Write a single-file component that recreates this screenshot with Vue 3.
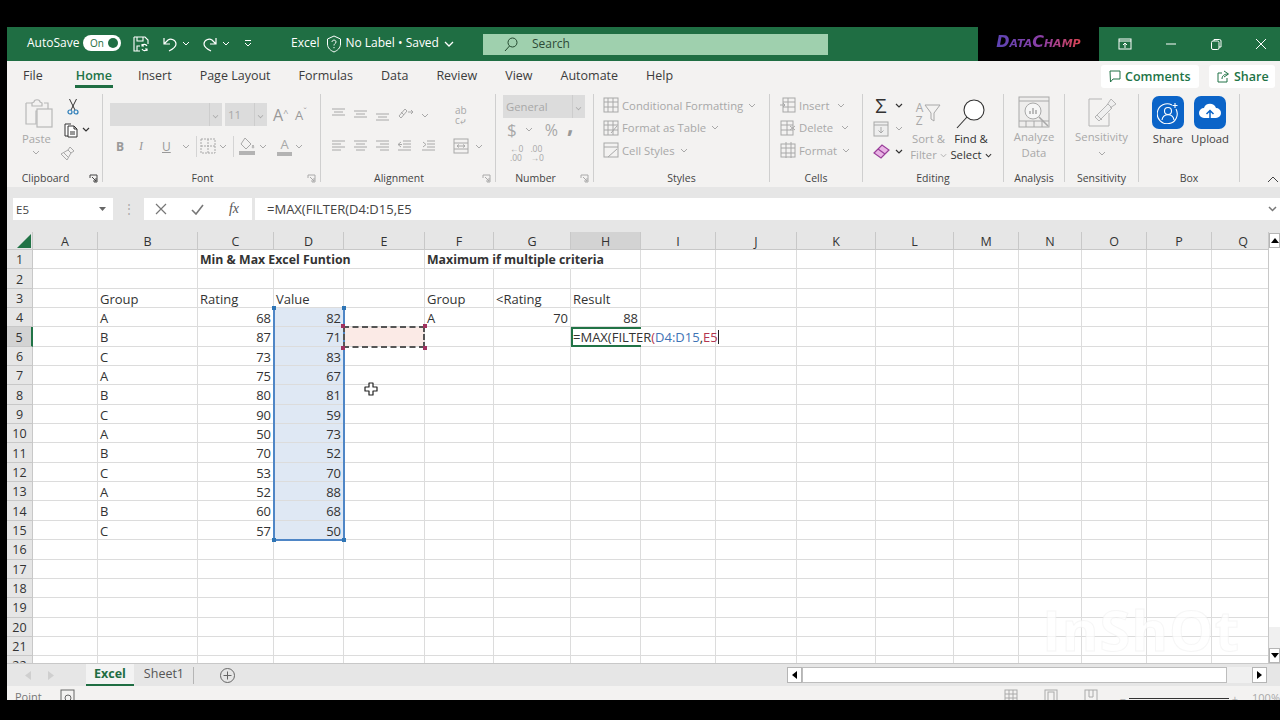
<template>
  <div class="screen">
    <div class="window">
      <!-- title bar -->
      <header class="titlebar">
        <span class="autosave">AutoSave</span>
        <span class="toggle">On<i></i></span>
        <svg class="tb-save" width="18" height="18" viewBox="0 0 18 18" fill="none" stroke="#fff" stroke-width="1.1"><path d="M2 2h11l3 3v4M2 2v14h6M5 2v4h6V2M5 16v-5h3"/><path d="M15 11a3 3 0 0 0-5-.5M10 14a3 3 0 0 0 5 .5M10 9v2h2M15 16v-2h-2"/></svg>
        <svg class="tb-undo" width="18" height="18" viewBox="0 0 18 18" fill="none" stroke="#fff" stroke-width="1.2"><path d="M3 3v6h6M3 9l4-4c3-2 8 0 8 4 0 3-3 5-7 7"/></svg>
        <svg class="chev-w" width="8" height="6" viewBox="0 0 8 6" fill="none" stroke="#fff"><path d="M1 1l3 3 3-3"/></svg>
        <svg class="tb-redo" width="18" height="18" viewBox="0 0 18 18" fill="none" stroke="#fff" stroke-width="1.2"><path d="M15 3v6H9M15 9l-4-4C8 3 3 5 3 9c0 3 3 5 7 7"/></svg>
        <svg class="chev-w" width="8" height="6" viewBox="0 0 8 6" fill="none" stroke="#fff"><path d="M1 1l3 3 3-3"/></svg>
        <svg class="tb-custom" width="10" height="10" viewBox="0 0 10 10" fill="none" stroke="#fff"><path d="M2 1.500h6M2 4l3 3 3-3" /></svg>
        <span class="doc">Excel</span>
        <svg class="shield" width="16" height="18" viewBox="0 0 16 18" fill="none" stroke="#fff" stroke-width="1"><path d="M8 1l6.500 3v5c0 4-3 6.500-6.500 8-3.500-1.500-6.500-4-6.500-8V4z"/><path d="M6 7c0-2.500 4-2.500 4 0 0 1.500-2 1.500-2 3.500M8 12v1.200"/></svg>
        <span class="doc-label">No Label • Saved</span>
        <svg class="chev-doc" width="10" height="7" viewBox="0 0 10 7" fill="none" stroke="#fff" stroke-width="1.300"><path d="M1 1l4 4 4-4"/></svg>
        <div class="search">
          <svg width="14" height="15" viewBox="0 0 14 15" fill="none" stroke="#24492f" stroke-width="1"><circle cx="8.500" cy="5.500" r="4.500"/><path d="M5.500 9L1 14"/></svg>
          <span>Search</span>
        </div>
        <div class="brand"><span>DataChamp</span></div>
        <div class="winbtns">
          <svg width="14" height="14" viewBox="0 0 14 14" fill="none" stroke="#fff"><rect x="1" y="2" width="12" height="10"/><path d="M1 4h12M7 11V6M5 8l2-2 2 2"/></svg>
          <svg width="12" height="12" viewBox="0 0 12 12" stroke="#fff"><path d="M1 6h10"/></svg>
          <svg width="12" height="12" viewBox="0 0 12 12" fill="none" stroke="#fff"><rect x="1.500" y="3" width="7.500" height="8.500" rx="1.500"/><path d="M4 3V1.500h5.500a1.500 1.500 0 0 1 1.500 1.500v6H9"/></svg>
          <svg width="12" height="12" viewBox="0 0 12 12" stroke="#fff"><path d="M1 1l10 10M11 1L1 11"/></svg>
        </div>
      </header>

      <!-- tabs -->
      <nav class="tabs">
        <span class="tab" v-for="t in tabs" :key="t" :class="{ active: t === 'Home' }">{{ t }}</span>
        <div class="tab-actions">
          <button class="pill comments">
            <svg width="12" height="13" viewBox="0 0 12 13" fill="none" stroke="#217346"><path d="M1 1h10v8H4L1.500 12z"/></svg>
            Comments
          </button>
          <button class="pill share">
            <svg width="13" height="13" viewBox="0 0 13 13" fill="none" stroke="#217346"><path d="M5 3H1v9h9V8M7 1l4.500 3L7 7M11 4C7 4 5 6 5 9"/></svg>
            Share
          </button>
        </div>
      </nav>

      <!-- ribbon -->
      <section class="ribbon">
        <div class="group g-clip">
          <div class="body clip">
            <div class="paste">
              <svg width="28" height="30" viewBox="0 0 28 30" fill="#f3f2f1" stroke="#b8b8b8" stroke-width="1.200"><path d="M1 5h6M19 5h4v8M1 5v21h10V13h12"/><path d="M7 5l2-1c0-3 6-3 6 0l2 1v3H7z"/><rect x="12" y="11" width="15" height="18"/></svg>
              <span>Paste</span>
              <svg class="chev" width="8" height="5" viewBox="0 0 8 5" fill="none" stroke="#a8a8a8"><path d="M1 1l3 3 3-3"/></svg>
            </div>
            <div class="clip-tools">
              <svg width="12" height="17" viewBox="0 0 12 17" fill="none" stroke="#333"><path d="M2.500 1l5.500 11M9.500 1L4 12"/><circle cx="3" cy="14" r="2" stroke="#2b7cb8" stroke-width="1.200"/><circle cx="9" cy="14" r="2" stroke="#2b7cb8" stroke-width="1.200"/></svg>
              <div class="copy-row">
                <svg width="17" height="17" viewBox="0 0 17 17" fill="#fff" stroke="#333"><path d="M10 3H4v12h3"/><path d="M7 5h6l3 3v8H7zM13 5v3h3M9 11h5M9 13h5" /></svg>
                <svg width="8" height="5" viewBox="0 0 8 5" fill="none" stroke="#333" stroke-width="1.200"><path d="M1 1l3 3 3-3"/></svg>
              </div>
              <svg class="brush" width="16" height="16" viewBox="0 0 16 16" fill="none" stroke="#a8a8a8"><path d="M10 2l4 4-3 2-3-3zM8 5L1 9l6 6 4-7M4 8l4 4"/></svg>
            </div>
          </div>
          <div class="glabel off">Clipboard<svg class="launch" width="9" height="9" viewBox="0 0 9 9" fill="none" stroke="#444"><path d="M1 4V1h7v7H5M3 3l4 4M7 4v3H4"/></svg></div>
        </div>

        <div class="group g-font">
          <div class="body font">
            <div class="font-row1">
              <div class="combo fname"><i></i></div>
              <div class="combo fsize">11<i></i></div>
              <span class="big-a">A<small>^</small></span>
              <span class="big-a two">A<small>ˇ</small></span>
            </div>
            <div class="font-row2">
              <b class="fb">B</b><em class="fi">I</em><u class="fu">U</u>
              <svg class="chev" width="8" height="5" viewBox="0 0 8 5" fill="none" stroke="#a8a8a8"><path d="M1 1l3 3 3-3"/></svg>
              <i class="vline"></i>
              <svg class="bdr" width="16" height="16" viewBox="0 0 16 16" fill="none" stroke="#a8a8a8"><path d="M1 1h14v14H1zM8 1v14M1 8h14" stroke-dasharray="2 1"/></svg>
              <svg class="chev" width="8" height="5" viewBox="0 0 8 5" fill="none" stroke="#a8a8a8"><path d="M1 1l3 3 3-3"/></svg>
              <i class="vline"></i>
              <svg class="fill" width="17" height="18" viewBox="0 0 17 18" fill="none" stroke="#a8a8a8"><path d="M6 1l6 6-5 5-5-5zM14 8c1 2 1 3 0 3s-1-1 0-3"/><rect x="0" y="14" width="16" height="4" fill="#b3b3b3" stroke="none"/></svg>
              <svg class="chev" width="8" height="5" viewBox="0 0 8 5" fill="none" stroke="#a8a8a8"><path d="M1 1l3 3 3-3"/></svg>
              <span class="acolor">A</span>
              <svg class="chev" width="8" height="5" viewBox="0 0 8 5" fill="none" stroke="#a8a8a8"><path d="M1 1l3 3 3-3"/></svg>
            </div>
          </div>
          <div class="glabel off">Font<svg class="launch" width="9" height="9" viewBox="0 0 9 9" fill="none" stroke="#aaa"><path d="M1 4V1h7v7H5M3 3l4 4M7 4v3H4"/></svg></div>
        </div>

        <div class="group g-align">
          <div class="body align">
            <div class="align-grid">
              <svg v-for="(d, i) in alignTop" :key="'t' + i" width="15" height="13" viewBox="0 0 15 13" fill="none" stroke="#a8a8a8"><path :d="d"/></svg>
              <svg width="18" height="16" viewBox="0 0 18 16" fill="none" stroke="#a8a8a8"><path d="M2 9l6-7 2 2-6 7zM4 5l3 3M11 5h5M16 5l-2-2M16 5l-2 2" /></svg>
              <svg class="chev" width="8" height="5" viewBox="0 0 8 5" fill="none" stroke="#a8a8a8"><path d="M1 1l3 3 3-3"/></svg>
              <span class="gapcell"></span>
              <span class="wrap">ab<br>c⤶</span>
              <svg v-for="(d, i) in alignBottom" :key="'b' + i" width="15" height="13" viewBox="0 0 15 13" fill="none" stroke="#a8a8a8"><path :d="d"/></svg>
              <span class="gapcell"></span>
              <span class="merge-row">
                <svg width="16" height="16" viewBox="0 0 16 16" fill="none" stroke="#a8a8a8"><rect x="1" y="1" width="14" height="14"/><path d="M1 5h14M1 11h14M4 8h8M6 6.500L4 8l2 1.500M10 6.500L12 8l-2 1.500"/></svg>
                <svg class="chev" width="8" height="5" viewBox="0 0 8 5" fill="none" stroke="#a8a8a8"><path d="M1 1l3 3 3-3"/></svg>
              </span>
            </div>
          </div>
          <div class="glabel off">Alignment<svg class="launch" width="9" height="9" viewBox="0 0 9 9" fill="none" stroke="#aaa"><path d="M1 4V1h7v7H5M3 3l4 4M7 4v3H4"/></svg></div>
        </div>

        <div class="group g-number">
          <div class="body number">
            <div class="combo general">General<i></i></div>
            <div class="num-row"><span class="n-dollar">$</span><svg class="chev" width="8" height="5" viewBox="0 0 8 5" fill="none" stroke="#a8a8a8"><path d="M1 1l3 3 3-3"/></svg><span class="n-pct">%</span><b class="n-comma">,</b></div>
            <div class="num-row small"><span>←0<br>.00</span><span>.00<br>→0</span></div>
          </div>
          <div class="glabel off">Number<svg class="launch" width="9" height="9" viewBox="0 0 9 9" fill="none" stroke="#aaa"><path d="M1 4V1h7v7H5M3 3l4 4M7 4v3H4"/></svg></div>
        </div>

        <div class="group g-styles">
          <div class="body list">
            <div class="li"><svg width="16" height="16" viewBox="0 0 16 16" fill="none" stroke="#a8a8a8"><rect x="1" y="1" width="14" height="14"/><path d="M1 5h14M1 10h14M5 1v14M10 1v14"/></svg>Conditional Formatting<svg class="chev" width="8" height="5" viewBox="0 0 8 5" fill="none" stroke="#a8a8a8"><path d="M1 1l3 3 3-3"/></svg></div>
            <div class="li"><svg width="16" height="16" viewBox="0 0 16 16" fill="none" stroke="#a8a8a8"><rect x="1" y="1" width="14" height="14"/><path d="M1 5h14M1 10h14M5 1v14M10 1v14M8 13l6-7"/></svg>Format as Table<svg class="chev" width="8" height="5" viewBox="0 0 8 5" fill="none" stroke="#a8a8a8"><path d="M1 1l3 3 3-3"/></svg></div>
            <div class="li"><svg width="16" height="16" viewBox="0 0 16 16" fill="none" stroke="#a8a8a8"><rect x="1" y="1" width="14" height="14"/><path d="M1 5h14M5 15l9-8"/></svg>Cell Styles<svg class="chev" width="8" height="5" viewBox="0 0 8 5" fill="none" stroke="#a8a8a8"><path d="M1 1l3 3 3-3"/></svg></div>
          </div>
          <div class="glabel">Styles</div>
        </div>

        <div class="group g-cells">
          <div class="body list cells">
            <div class="li"><svg width="16" height="16" viewBox="0 0 16 16" fill="none" stroke="#a8a8a8"><rect x="3" y="1" width="12" height="14"/><path d="M3 5h12M3 10h12M8 1v14M0 8h5M3 6l2 2-2 2"/></svg>Insert<svg class="chev far" width="8" height="5" viewBox="0 0 8 5" fill="none" stroke="#a8a8a8"><path d="M1 1l3 3 3-3"/></svg></div>
            <div class="li"><svg width="16" height="16" viewBox="0 0 16 16" fill="none" stroke="#a8a8a8"><rect x="1" y="1" width="12" height="14"/><path d="M1 5h12M1 10h12M7 1v14M10 6l5 4M15 6l-5 4"/></svg>Delete<svg class="chev far" width="8" height="5" viewBox="0 0 8 5" fill="none" stroke="#a8a8a8"><path d="M1 1l3 3 3-3"/></svg></div>
            <div class="li"><svg width="16" height="16" viewBox="0 0 16 16" fill="none" stroke="#a8a8a8"><rect x="1" y="2" width="14" height="13"/><path d="M1 6h14M1 11h14M6 0v16M11 0v16"/></svg>Format<svg class="chev" width="8" height="5" viewBox="0 0 8 5" fill="none" stroke="#a8a8a8"><path d="M1 1l3 3 3-3"/></svg></div>
          </div>
          <div class="glabel">Cells</div>
        </div>

        <div class="group g-edit">
          <div class="body edit">
            <div class="edit-left">
              <div class="er"><span class="sigma">Σ</span><svg width="8" height="5" viewBox="0 0 8 5" fill="none" stroke="#333" stroke-width="1.200"><path d="M1 1l3 3 3-3"/></svg></div>
              <div class="er"><svg width="16" height="16" viewBox="0 0 16 16" fill="#eee" stroke="#a8a8a8"><rect x="1" y="1" width="14" height="14"/><path d="M1 4h14M8 6v6M5.500 9.500L8 12l2.500-2.500" fill="none"/></svg><svg width="8" height="5" viewBox="0 0 8 5" fill="none" stroke="#a8a8a8"><path d="M1 1l3 3 3-3"/></svg></div>
              <div class="er"><svg width="17" height="15" viewBox="0 0 17 15" fill="#e9b4e5" stroke="#9a3f9a" stroke-width="1.200"><path d="M1 9l8-8 7 5-8 8z"/><path d="M5 5l7 5" fill="none"/></svg><svg width="8" height="5" viewBox="0 0 8 5" fill="none" stroke="#333" stroke-width="1.200"><path d="M1 1l3 3 3-3"/></svg></div>
            </div>
            <div class="big-btn sort">
              <span class="big-ico sort-ico"><span class="az">A<br>Z</span><svg width="17" height="19" viewBox="0 0 17 19" fill="none" stroke="#a8a8a8"><path d="M1 1h15l-6 8v8l-3-2V9z"/></svg></span>
              <span class="dim">Sort &amp;</span>
              <span class="dim">Filter <svg width="7" height="5" viewBox="0 0 8 5" fill="none" stroke="#a8a8a8"><path d="M1 1l3 3 3-3"/></svg></span>
            </div>
            <div class="big-btn find">
              <span class="big-ico"><svg width="30" height="30" viewBox="0 0 30 30" fill="#fff" stroke="#333" stroke-width="1.100"><circle cx="18" cy="11" r="10"/><path d="M11 18L1 29" fill="none"/></svg></span>
              <span>Find &amp;</span>
              <span>Select <svg width="7" height="5" viewBox="0 0 8 5" fill="none" stroke="#333" stroke-width="1.200"><path d="M1 1l3 3 3-3"/></svg></span>
            </div>
          </div>
          <div class="glabel">Editing</div>
        </div>

        <div class="group g-analysis">
          <div class="body big-btn single">
            <span class="big-ico"><svg width="32" height="32" viewBox="0 0 32 32" fill="none" stroke="#a8a8a8"><rect x="1" y="1" width="30" height="30" fill="#eeedec"/><path d="M1 5h30M1 25h30M8 25v6M16 25v6M24 25v6"/><circle cx="15" cy="15" r="8" fill="#f6f6f6"/><path d="M21 21l9 9M12 18v-3M15 18v-6M18 18v-4" stroke-width="1.500"/></svg></span>
            <span class="dim">Analyze</span><span class="dim">Data</span>
          </div>
          <div class="glabel">Analysis</div>
        </div>

        <div class="group g-sens">
          <div class="body big-btn single">
            <span class="big-ico"><svg width="28" height="30" viewBox="0 0 28 30" fill="none" stroke="#b5b5b5"><path d="M1 2h13M1 2v27h20V16"/><path d="M7 20l13-13 4 4-13 13zM9 18l5 5M19 8l4-6 5 5-6 4" fill="#efefef"/></svg></span>
            <span class="dim">Sensitivity</span>
            <svg class="chev sens-chev" width="8" height="5" viewBox="0 0 8 5" fill="none" stroke="#a8a8a8"><path d="M1 1l3 3 3-3"/></svg>
          </div>
          <div class="glabel">Sensitivity</div>
        </div>

        <div class="group g-box">
          <div class="body box">
            <div class="box-btn">
              <span class="tile"><svg width="22" height="22" viewBox="0 0 22 22" fill="none" stroke="#fff" stroke-width="1.100"><path d="M19 7a10 10 0 1 1-4-4"/><circle cx="11" cy="9" r="3.500"/><path d="M5 18c1-7 11-7 12 0M18 1v5M15.500 3.500h5"/></svg></span>
              Share
            </div>
            <div class="box-btn">
              <span class="tile"><svg width="24" height="22" viewBox="0 0 24 22" fill="#fff"><path d="M6 16a5 5 0 0 1 0-10c1-5 10-6 12 0a5 5 0 0 1 0 10z"/><path d="M12 20V9M8.500 12L12 8.500 15.500 12" fill="none" stroke="#0b64c8" stroke-width="1.500"/></svg></span>
              Upload
            </div>
          </div>
          <div class="glabel">Box</div>
        </div>
        <svg class="collapse" width="12" height="7" viewBox="0 0 12 7" fill="none" stroke="#444"><path d="M1 6l5-5 5 5"/></svg>
      </section>

      <!-- formula bar -->
      <section class="fbar">
        <div class="namebox">E5<svg width="7" height="5" viewBox="0 0 7 5" fill="#666"><path d="M0 0h7L3.500 4z"/></svg></div>
        <span class="dots">⋮</span>
        <div class="fbtns">
          <svg width="12" height="12" viewBox="0 0 12 12" stroke="#777" stroke-width="1.200"><path d="M1 1l10 10M11 1L1 11"/></svg>
          <svg width="13" height="11" viewBox="0 0 13 11" fill="none" stroke="#777" stroke-width="1.600"><path d="M1 6l4 4 7-9"/></svg>
          <em>fx</em>
        </div>
        <div class="finput">=MAX(FILTER(D4:D15,E5<svg width="9" height="6" viewBox="0 0 9 6" fill="none" stroke="#777" stroke-width="1.500"><path d="M1 1l3.500 3.500L8 1"/></svg></div>
      </section>

      <!-- sheet -->
      <section class="sheet-wrap">
        <div class="sheet">
          <div class="corner" style="grid-row: 1; grid-column: 1"><i></i></div>
          <div v-for="(c, i) in cols" :key="c" class="colh" :class="{ on: c === 'H' }" :style="{ gridRow: 1, gridColumn: i + 2 }">{{ c }}</div>
          <template v-for="r in 22" :key="r">
            <div class="rowh" :class="{ on: r === 5 }" :style="{ gridRow: r + 1, gridColumn: 1 }">{{ r }}</div>
            <div
              v-for="(c, i) in cols"
              :key="c + r"
              :class="cellClass(c, r)"
              :style="{ gridRow: r + 1, gridColumn: i + 2 }"
            >{{ cellText(c, r) }}</div>
          </template>
          <div class="sel-range">
            <i class="h1"></i><i class="h2"></i><i class="h3"></i><i class="h4"></i>
          </div>
          <div class="ants">
            <i class="h1"></i><i class="h2"></i><i class="h3"></i><i class="h4"></i>
          </div>
          <div class="edit-box">=MAX(FILTER<span class="p-red">(</span><span class="p-blue">D4:D15</span>,<span class="p-red">E5</span><i class="caret"></i></div>
          <svg class="cursor" width="14" height="14" viewBox="0 0 14 14" fill="#fff" stroke="#222" stroke-width="1.200"><path d="M5 1h4v4h4v4H9v4H5V9H1V5h4z" stroke-linejoin="round"/></svg>
        </div>
        <div class="watermark">InShOt</div>
        <aside class="vscroll">
          <span class="sbtn"><svg width="8" height="5" viewBox="0 0 8 5"><path d="M0 5h8L4 0z"/></svg></span>
          <span class="vthumb"></span>
          <span class="vtrack"></span>
          <span class="sbtn"><svg width="8" height="5" viewBox="0 0 8 5"><path d="M0 0h8L4 5z"/></svg></span>
        </aside>
      </section>

      <!-- sheet tabs -->
      <section class="sheettabs">
        <div class="nav-arrows">
          <svg width="6" height="9" viewBox="0 0 6 9" fill="#cfcfcf"><path d="M6 0v9L0 4.500z"/></svg>
          <svg width="6" height="9" viewBox="0 0 6 9" fill="#cfcfcf"><path d="M0 0v9l6-4.500z"/></svg>
        </div>
        <div class="stab active">Excel</div>
        <div class="stab">Sheet1</div>
        <span class="stab-sep"></span>
        <svg class="add" width="15" height="15" viewBox="0 0 15 15" fill="none" stroke="#666"><circle cx="7.500" cy="7.500" r="7"/><path d="M7.500 3.500v8M3.500 7.500h8"/></svg>
        <div class="hscroll">
          <span class="hbtn"><svg width="5" height="8" viewBox="0 0 5 8"><path d="M5 0v8L0 4z"/></svg></span>
          <span class="hthumb"></span>
          <span class="htrack"></span>
          <span class="hbtn"><svg width="5" height="8" viewBox="0 0 5 8"><path d="M0 0v8l5-4z"/></svg></span>
        </div>
      </section>

      <!-- status bar, clipped by the black frame -->
      <footer class="status">
        <span class="point">Point</span>
        <svg class="macro" width="15" height="15" viewBox="0 0 15 15" fill="none" stroke="#666"><rect x="1" y="1" width="13" height="13"/><circle cx="8" cy="9" r="3"/></svg>
        <div class="status-right">
          <svg width="14" height="14" viewBox="0 0 14 14" fill="none" stroke="#aaa"><rect x="1" y="1" width="12" height="12"/><path d="M1 5h12M1 9h12M5 1v12M9 1v12"/></svg>
          <svg width="14" height="14" viewBox="0 0 14 14" fill="none" stroke="#aaa"><rect x="1" y="1" width="12" height="12"/><rect x="4" y="3" width="6" height="10"/></svg>
          <svg width="14" height="14" viewBox="0 0 14 14" fill="none" stroke="#aaa"><rect x="1" y="1" width="12" height="12"/><path d="M5 1v7h4V1"/></svg>
          <div class="zoom"><span>−</span><i></i><span>+</span></div>
          <span class="pct">100%</span>
        </div>
      </footer>
    </div>
  </div>
</template>

<script setup>
const tabs = ['File', 'Home', 'Insert', 'Page Layout', 'Formulas', 'Data', 'Review', 'View', 'Automate', 'Help']
const cols = 'ABCDEFGHIJKLMNOPQ'.split('')

const alignTop = ['M1 1h13M3 4h9M1 7h13', 'M1 3h13M3 6h9M1 9h13', 'M1 6h13M3 9h9M1 12h13']
const alignBottom = [
  'M1 1h13M1 4h9M1 7h13M1 10h9',
  'M1 1h13M3 4h9M1 7h13M3 10h9',
  'M1 1h13M5 4h9M1 7h13M5 10h9',
  'M6 1h8M6 4h8M6 7h8M1 10h13M4 2L1 4.500 4 7M1 4.500h4',
  'M6 1h8M6 4h8M6 7h8M1 10h13M2 2l3 2.500L2 7'
]

const groups = ['A', 'B', 'C', 'A', 'B', 'C', 'A', 'B', 'C', 'A', 'B', 'C']
const ratings = [68, 87, 73, 75, 80, 90, 50, 70, 53, 52, 60, 57]
const values = [82, 71, 83, 67, 81, 59, 73, 52, 70, 88, 68, 50]

const cells = {
  C1: 'Min & Max Excel Funtion',
  F1: 'Maximum if multiple criteria',
  B3: 'Group', C3: 'Rating', D3: 'Value',
  F3: 'Group', G3: '<Rating', H3: 'Result',
  F4: 'A', G4: 70, H4: 88
}
groups.forEach((g, i) => {
  cells['B' + (i + 4)] = g
  cells['C' + (i + 4)] = ratings[i]
  cells['D' + (i + 4)] = values[i]
})

// cells whose text runs over the neighbour lose the gridline in between
const noRight = ['C1', 'D1', 'F1', 'G1']

const cellText = (c, r) => cells[c + r] ?? ''

const cellClass = (c, r) => {
  const key = c + r
  return {
    cell: true,
    num: typeof cells[key] === 'number',
    bold: r === 1,
    picked: c === 'D' && r >= 4 && r <= 15,
    marked: key === 'E5',
    'no-right': noRight.includes(key)
  }
}
</script>

<style>
html, body { margin: 0; background: #000; }
</style>

<style scoped>
.screen {
  width: 1280px;
  height: 720px;
  background: #000;
  overflow: hidden;
  padding: 27px 0 0 7px;
  box-sizing: border-box;
  font-family: "Open Sans", "Noto Sans", sans-serif;
  color: #444;
}
.window {
  width: 1273px;
  height: 673px;
  background: #f3f2f1;
  overflow: hidden;
  display: flex;
  flex-direction: column;
}
svg { display: block; flex-shrink: 0; }

/* title bar */
.titlebar {
  height: 34px;
  background: #1f6e43;
  color: #fff;
  display: flex;
  align-items: center;
  font-size: 12px;
  flex-shrink: 0;
  line-height: 14px;
}
.titlebar > span { margin-top: -2px; }
.autosave { margin-left: 20px; width: 56px; }
.toggle {
  width: 38px;
  height: 16px;
  border-radius: 8px;
  background: #fff;
  color: #1f6e43;
  font-size: 10px;
  line-height: 16px;
  padding-left: 7px;
  box-sizing: border-box;
  display: flex;
  justify-content: space-between;
  align-items: center;
}
.toggle i {
  width: 10px;
  height: 10px;
  border-radius: 50%;
  background: #1f6e43;
  margin-right: 3px;
}
.tb-save { margin-left: 11px; }
.tb-undo { margin-left: 11px; }
.chev-w { margin-left: 3px; }
.tb-redo { margin-left: 11px; }
.tb-custom { margin-left: 13px; }
.doc { margin-left: 38px; }
.shield { margin-left: 7px; }
.doc-label { margin-left: 3px; }
.chev-doc { margin-left: 5px; }
.search {
  width: 345px;
  height: 21px;
  background: #9fd0ae;
  margin-left: 29px;
  display: flex;
  align-items: center;
  padding-left: 21px;
  box-sizing: border-box;
  gap: 14px;
  color: #2d4a36;
}
.brand {
  width: 121px;
  height: 34px;
  margin-left: 150px;
  background: #000;
  display: flex;
  align-items: center;
  justify-content: center;
  padding-bottom: 4px;
  box-sizing: border-box;
}
.brand span {
  font-family: "DejaVu Sans", sans-serif;
  font-size: 16px;
  font-variant: small-caps;
  font-style: italic;
  font-weight: 700;
  background: linear-gradient(90deg, #5c44b4, #8f3fa6 55%, #d8434f);
  -webkit-background-clip: text;
  background-clip: text;
  color: transparent;
}
.winbtns {
  display: flex;
  align-items: center;
  gap: 33px;
  margin-left: 19px;
}

/* tabs */
.tabs {
  height: 30px;
  display: flex;
  align-items: center;
  font-size: 12.5px;
  position: relative;
  flex-shrink: 0;
  color: #3c3c3c;
  padding-left: 6px;
}
.tab {
  padding: 0 10px;
  margin-right: 8px;
  height: 30px;
  line-height: 30px;
  box-sizing: border-box;
  white-space: nowrap;
}
.tab:first-child { margin-right: 13px; }
.tab.active {
  font-weight: 600;
  color: #217346;
  position: relative;
  margin-right: 6px;
}
.tab.active::after {
  content: "";
  position: absolute;
  left: 9px;
  right: 9px;
  bottom: 3px;
  height: 3px;
  background: #1f6e43;
}
.tab-actions {
  margin-left: auto;
  display: flex;
  gap: 10px;
  margin-right: 5px;
}
.pill {
  height: 23px;
  border: 0;
  background: #fff;
  border-radius: 3px;
  font: 600 12.5px "Open Sans", sans-serif;
  color: #217346;
  display: flex;
  align-items: center;
  gap: 4px;
  padding: 0 8px;
  box-sizing: border-box;
}
.comments { width: 98px; }
.share { width: 66px; }

/* ribbon */
.ribbon {
  height: 96px;
  display: flex;
  align-items: flex-start;
  font-size: 11.3px;
  position: relative;
  flex-shrink: 0;
  color: #a8a8a8;
}
.group {
  margin-top: 3px;
  height: 88px;
  border-right: 1px solid #cfcfcf;
  display: flex;
  flex-direction: column;
  box-sizing: border-box;
  flex-shrink: 0;
}
.body { flex: 1; min-height: 0; }
.glabel {
  height: 16px;
  margin-bottom: -4px;
  line-height: 16px;
  text-align: center;
  color: #444;
  font-size: 10.5px;
  position: relative;
}
.glabel.off { padding-right: 18px; }
.launch { position: absolute; right: 4px; top: 4px; }
.g-clip { width: 96px; }
.g-font { width: 218px; }
.g-align { width: 175px; }
.g-number { width: 98px; }
.g-styles { width: 176px; }
.g-cells { width: 93px; }
.g-edit { width: 141px; }
.g-analysis { width: 61px; }
.g-sens { width: 74px; }
.g-box { width: 101px; }
.collapse { position: absolute; right: 1px; bottom: 4px; }

.clip { display: flex; padding: 4px 0 0 15px; }
.paste { width: 36px; display: flex; flex-direction: column; align-items: flex-start; }
.paste svg:first-child { margin-left: 3px; }
.paste span { margin-top: 3px; line-height: 16px; }
.paste .chev { margin: 3px 0 0 10px; }
.clip-tools { display: flex; flex-direction: column; gap: 7px; padding-left: 3px; }
.clip-tools > svg:first-child { margin-left: 6px; }
.copy-row { display: flex; align-items: center; gap: 2px; margin-top: -1px; }
.copy-row svg:last-child { margin-left: 2px; }
.brush { margin-left: -1px; }

.combo {
  background: #dcdcdc;
  position: relative;
  box-sizing: border-box;
}
.combo i {
  position: absolute;
  right: 0;
  top: 0;
  bottom: 0;
  width: 12px;
  border-left: 1px solid #cdcdcd;
}
.combo i::after {
  content: "";
  position: absolute;
  top: 10px;
  left: 3px;
  width: 4px;
  height: 4px;
  border: solid #a8a8a8;
  border-width: 0 1px 1px 0;
  transform: rotate(45deg) scale(.8);
}
.font { padding: 9px 0 0 7px; }
.font-row1 { display: flex; align-items: center; }
.fname { width: 112px; height: 23px; }
.fsize { width: 42px; height: 23px; margin-left: 3px; line-height: 23px; padding-left: 3px; font-size: 11.5px; }
.big-a { font-size: 16px; margin-left: 6px; width: 19px; white-space: nowrap; color: #999; }
.big-a.two { font-size: 13px; margin-left: 3px; }
.big-a small { font-size: 9px; vertical-align: 5px; }
.font-row2 { display: flex; align-items: center; margin-top: 10px; height: 20px; padding-left: 6px; }
.fb { font-size: 12px; width: 23px; color: #999; }
.fi { font-size: 12px; width: 23px; font-family: "Liberation Serif", serif; color: #999; }
.fu { font-size: 12px; width: 17px; color: #999; }
.font-row2 .chev { margin-left: 3px; }
.vline { width: 1px; height: 21px; background: #d4d4d4; margin: 0 3px 0 6px; }
.bdr { margin-left: 0; }
.fill { margin-left: 2px; }
.acolor {
  margin-left: 10px;
  font-size: 13px;
  line-height: 15px;
  border-bottom: 4px solid #b3b3b3;
  width: 15px;
  text-align: center;
}
.align { padding: 13px 0 0 10px; }
.align-grid {
  display: grid;
  grid-template-columns: 22px 22px 22px 24px 24px 10px 30px;
  grid-auto-rows: 33px;
  align-items: start;
}
.align-grid > svg:nth-child(-n+3) { margin-top: 1px; }
.align-grid .chev { align-self: start; margin-top: 6px; }
.wrap { font-size: 10px; line-height: 10px; margin-top: -2px; white-space: nowrap; }
.merge-row { display: flex; align-items: center; gap: 6px; margin-top: -2px; margin-left: -2px; }
.number { padding: 1px 0 0 7px; }
.general {
  width: 82px;
  height: 23px;
  line-height: 23px;
  padding-left: 3px;
}
.general i { width: 12px; }
.num-row { display: flex; align-items: center; height: 23px; margin-top: 0; padding-left: 4px; }
.n-dollar { font-size: 17px; }
.num-row .chev { margin-left: 8px; }
.n-pct { font-size: 16px; margin-left: 12px; }
.n-comma { font-size: 23px; margin: -12px 0 0 9px; color: #999; }
.num-row.small { font-size: 8.5px; line-height: 9px; gap: 7px; margin-top: 0; padding-left: 7px; }
.list { display: flex; flex-direction: column; padding: 3px 0 0 9px; gap: 6px; }
.li { display: flex; align-items: center; height: 16.500px; gap: 3px; white-space: nowrap; }
.li .chev { margin-left: 2px; }
.cells { padding-left: 10px; }
.cells .far { margin-left: 5px; }
.edit { display: flex; padding: 3px 0 0 10px; }
.edit-left { width: 33px; display: flex; flex-direction: column; gap: 6px; }
.er { display: flex; align-items: center; height: 17px; gap: 3px; width: 30px; justify-content: space-between; }
.sigma { font-size: 20px; line-height: 17px; color: #333; width: 16px; text-align: center; }
.big-btn {
  display: flex;
  flex-direction: column;
  align-items: center;
  line-height: 16px;
  white-space: nowrap;
}
.big-btn .dim { color: #a8a8a8; }
.big-ico { height: 33px; margin-bottom: 1px; display: flex; align-items: center; }
.sort { width: 45px; margin-left: 0; }
.sort-ico { gap: 1px; }
.az { font-size: 12px; line-height: 13px; }
.find { width: 40px; margin-left: 0; color: #333; }
.find span { display: flex; align-items: center; gap: 3px; }
.sort span.dim { display: flex; align-items: center; gap: 3px; }
.single { padding-top: 1px; }
.sens-chev { margin-top: 6px; }
.box { display: flex; padding: 2px 0 0 13px; gap: 10px; color: #444; }
.box-btn { width: 32px; display: flex; flex-direction: column; align-items: center; line-height: 16px; }
.tile {
  width: 32px;
  height: 33px;
  border-radius: 7px;
  background: #0b64c8;
  display: flex;
  align-items: center;
  justify-content: center;
  margin-bottom: 2px;
}

/* formula bar */
.fbar {
  height: 45px;
  background: #e6e6e6;
  display: flex;
  align-items: flex-start;
  padding: 11px 0 0 6px;
  box-sizing: border-box;
  flex-shrink: 0;
  font-size: 11.5px;
  color: #444;
}
.namebox {
  width: 100px;
  height: 22px;
  background: #fff;
  display: flex;
  align-items: center;
  justify-content: space-between;
  padding: 0 7px 0 3px;
  box-sizing: border-box;
}
.dots { width: 31px; text-align: center; color: #aaa; line-height: 22px; }
.fbtns {
  width: 108px;
  height: 22px;
  background: #fff;
  display: flex;
  align-items: center;
  justify-content: space-between;
  padding: 0 13px 0 11px;
  box-sizing: border-box;
}
.fbtns em { font: italic 14px "Liberation Serif", serif; color: #555; }
.finput {
  margin-left: 3px;
  flex: 1;
  height: 22px;
  background: #fff;
  display: flex;
  align-items: center;
  justify-content: space-between;
  padding: 0 3px 0 12px;
  box-sizing: border-box;
  font-size: 13px;
}

/* sheet */
.sheet-wrap {
  height: 431px;
  position: relative;
  display: flex;
  overflow: hidden;
  flex-shrink: 0;
  background: #fff;
}
.sheet {
  position: relative;
  display: grid;
  grid-template-columns: 26px 65px 100px 76px 70px 81px 69px 77px 70px 75px 81px 79px 78px 65px 63px 65px 65px 63px;
  grid-template-rows: 18px repeat(22, 19.35px);
  width: 1261px;
  flex-shrink: 0;
  font-size: 13px;
  color: #333;
  overflow: hidden;
}
.corner, .colh, .rowh {
  background: #e6e6e6;
  display: flex;
  align-items: center;
  justify-content: center;
  box-sizing: border-box;
  border-right: 1px solid #c8c8c8;
  border-bottom: 1px solid #c8c8c8;
  font-size: 12.5px;
  padding-top: 1px;
}
.colh.on { background: #d3d3d3; }
.rowh.on { background: #d3d3d3; border-right: 2px solid #217346; }
.corner i {
  width: 0;
  height: 0;
  border-left: 14px solid transparent;
  border-bottom: 14px solid #217346;
  margin-left: 9px;
}
.cell {
  box-sizing: border-box;
  border-right: 1px solid #dcdcdc;
  border-bottom: 1px solid #dcdcdc;
  padding: 1px 2px 0;
  line-height: 18px;
  white-space: nowrap;
  min-width: 0;
}
.cell.num { text-align: right; }
.cell.bold { font-weight: 700; font-size: 12.3px; }
.cell.no-right { border-right-color: transparent; }
.cell.picked { background: #dfe8f4; }
.cell.marked { background: #fbeae6; }

.sel-range {
  grid-row: 5 / 17;
  grid-column: 5;
  border: 2px solid #4f86c6;
  border-width: 0 2px 2px 2px;
  margin: 0 -1px -1px -1px;
  position: relative;
  pointer-events: none;
}
.sel-range i, .ants i {
  position: absolute;
  width: 4px;
  height: 4px;
}
.sel-range i { background: #2f75b5; }
.sel-range .h1 { left: -3px; top: -2px; }
.sel-range .h2 { right: -3px; top: -2px; }
.sel-range .h3 { left: -3px; bottom: -3px; }
.sel-range .h4 { right: -3px; bottom: -3px; }
.ants {
  grid-row: 6;
  grid-column: 6;
  border: 2px dashed #555;
  margin: -1px 0 -1px -1px;
  position: relative;
}
.ants i { background: #a0315f; }
.ants .h1 { left: -4px; top: -4px; }
.ants .h2 { right: -4px; top: -4px; }
.ants .h3 { left: -4px; bottom: -4px; }
.ants .h4 { right: -4px; bottom: -4px; }
.edit-box {
  grid-row: 6;
  grid-column: 9 / 11;
  margin-right: 70px;
  background: #fff;
  position: relative;
  white-space: nowrap;
  line-height: 18px;
  padding-left: 2px;
  height: 19px;
  box-sizing: border-box;
  padding-top: 1px;
}
.edit-box::before {
  content: "";
  position: absolute;
  left: 0;
  top: 0;
  bottom: -1px;
  width: 70px;
  border: solid #217346;
  border-width: 2px 0 2px 2px;
  box-sizing: border-box;
}
.p-red { color: #b3364f; }
.p-blue { color: #3f74b5; }
.caret {
  display: inline-block;
  width: 1px;
  height: 14px;
  background: #222;
  vertical-align: -2px;
}
.cursor { position: absolute; left: 357px; top: 150px; }
.watermark {
  position: absolute;
  right: 40px;
  bottom: -4px;
  font-size: 56px;
  font-weight: 700;
  letter-spacing: 1px;
  color: rgba(255, 255, 255, .7);
  -webkit-text-stroke: 1px rgba(236, 236, 236, .45);
  pointer-events: none;
}
.vscroll {
  flex: 1;
  background: #e6e6e6;
  display: flex;
  flex-direction: column;
  padding-top: 1px;
  border-left: 1px solid #c8c8c8;
}
.sbtn {
  height: 15px;
  background: #fff;
  border: 1px solid #b5b5b5;
  box-sizing: border-box;
  display: flex;
  align-items: center;
  justify-content: center;
  flex-shrink: 0;
}
.vthumb { flex: 1; background: #fff; }
.vtrack { height: 21px; background: #f0f0f0; }

/* sheet tabs */
.sheettabs {
  height: 23px;
  background: #e6e6e6;
  display: flex;
  align-items: stretch;
  font-size: 12.5px;
  flex-shrink: 0;
  border-top: 1px solid #c8c8c8;
  box-sizing: border-box;
}
.nav-arrows {
  width: 79px;
  display: flex;
  align-items: center;
  gap: 17px;
  padding-left: 18px;
  box-sizing: border-box;
}
.stab { padding: 0 9px 0 10px; line-height: 20px; color: #555; }
.stab.active {
  background: #f3f3f3;
  color: #1f6e43;
  font-weight: 700;
  border-bottom: 2px solid #1f6e43;
  padding: 0 8px;
  box-sizing: border-box;
}
.stab-sep { width: 1px; height: 17px; background: #b5b5b5; align-self: center; }
.add { align-self: center; margin-left: 26px; }
.hscroll {
  margin-left: auto;
  width: 480px;
  margin-right: 13px;
  display: flex;
  align-items: center;
}
.hbtn {
  width: 15px;
  height: 16px;
  background: #fff;
  border: 1px solid #b5b5b5;
  box-sizing: border-box;
  display: flex;
  align-items: center;
  justify-content: center;
  flex-shrink: 0;
}
.hthumb { width: 425px; height: 16px; background: #fff; border: 1px solid #bdbdbd; box-sizing: border-box; }
.htrack { flex: 1; height: 16px; background: #f0f0f0; }

/* status */
.status {
  height: 14px;
  display: flex;
  font-size: 11px;
  color: #777;
  position: relative;
  overflow: hidden;
  flex-shrink: 0;
}
.point { margin: 3px 0 0 8px; line-height: 15px; }
.macro { margin: 3px 0 0 18px; }
.status-right {
  margin-left: auto;
  display: flex;
  gap: 26px;
  padding: 3px 0 0;
}
.zoom { display: flex; gap: 3px; align-items: center; height: 14px; margin-top: 2px; color: #aaa; margin-left: -5px; }
.zoom i { width: 100px; height: 1px; background: #333; }
.pct { margin-left: -12px; color: #aaa; line-height: 18px; }
</style>
